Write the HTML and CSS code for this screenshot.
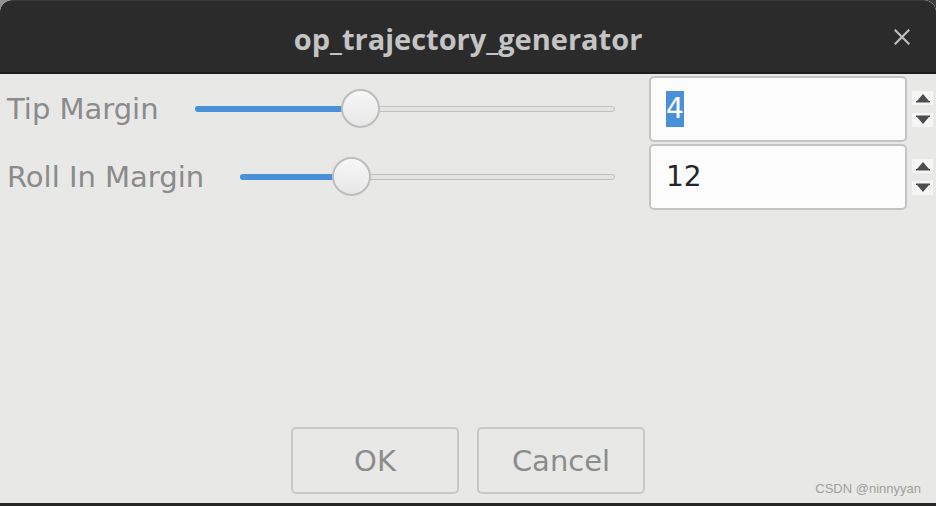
FILE: index.html
```html
<!DOCTYPE html>
<html lang="en">
<head>
<meta charset="utf-8">
<title>op_trajectory_generator</title>
<link rel="stylesheet" href="styles.css">
</head>
<body>
<div class="window">
  <header class="titlebar">
    <span class="spacer"></span>
    <h1 class="title">op_trajectory_generator</h1>
    <div class="actions">
      <button class="close" aria-label="Close">
        <svg width="16" height="16" viewBox="0 0 16 16"><path d="M1.5 1.5 L14.5 14.5 M14.5 1.5 L1.5 14.5" stroke="#bdbdbd" stroke-width="2.2" stroke-linecap="square" fill="none"/></svg>
      </button>
    </div>
  </header>

  <main class="content">
    <div class="row">
      <label class="label">Tip Margin</label>
      <div class="slider">
        <div class="track">
          <div class="fill" style="width:164.5px"></div>
          <div class="handle" style="left:164.5px"></div>
        </div>
      </div>
      <div class="spin"><span class="value selected">4</span></div>
      <div class="arrows">
        <span class="arrow"><svg width="16" height="10" viewBox="0 0 16 10"><path d="M8 1 L14 8 L2 8 Z" fill="#4d4d4d"/><rect x="1" y="8" width="14" height="1.5" fill="#4d4d4d"/></svg></span>
        <span class="arrow"><svg width="16" height="10" viewBox="0 0 16 10"><rect x="1" y="0.5" width="14" height="1.5" fill="#4d4d4d"/><path d="M2 2 L14 2 L8 9 Z" fill="#4d4d4d"/></svg></span>
      </div>
    </div>

    <div class="row">
      <label class="label">Roll In Margin</label>
      <div class="slider">
        <div class="track">
          <div class="fill" style="width:110.5px"></div>
          <div class="handle" style="left:110.5px"></div>
        </div>
      </div>
      <div class="spin"><span class="value">12</span></div>
      <div class="arrows">
        <span class="arrow"><svg width="16" height="10" viewBox="0 0 16 10"><path d="M8 1 L14 8 L2 8 Z" fill="#4d4d4d"/><rect x="1" y="8" width="14" height="1.5" fill="#4d4d4d"/></svg></span>
        <span class="arrow"><svg width="16" height="10" viewBox="0 0 16 10"><rect x="1" y="0.5" width="14" height="1.5" fill="#4d4d4d"/><path d="M2 2 L14 2 L8 9 Z" fill="#4d4d4d"/></svg></span>
      </div>
    </div>

    <div class="buttons">
      <button class="btn">OK</button>
      <button class="btn">Cancel</button>
    </div>
  </main>

  <div class="strip"></div>
  <div class="watermark">CSDN @ninnyyan</div>
</div>
</body>
</html>
```

FILE: styles.css
```css
html, body {
  margin: 0;
  padding: 0;
}
body {
  width: 936px;
  height: 506px;
  overflow: hidden;
  background: linear-gradient(to right, #939393, #3c3c3c);
}
.window {
  position: relative;
  width: 936px;
  height: 506px;
  display: flex;
  flex-direction: column;
  background: #e8e8e7;
  border-radius: 12px 12px 0 0;
  overflow: hidden;
}
.titlebar {
  height: 71px;
  flex: none;
  display: grid;
  grid-template-columns: 1fr auto 1fr;
  align-items: center;
  background: #2b2b2b;
  border-top: 1px solid #3b3b3b;
  border-bottom: 2px solid #1d1d1d;
  border-radius: 12px 12px 0 0;
}
.title {
  margin: 4px 0 0 0;
  font-family: "Open Sans", "DejaVu Sans", sans-serif;
  font-weight: 700;
  font-size: 29px;
  color: #c4c4c4;
  letter-spacing: 0;
}
.actions {
  display: flex;
  justify-content: flex-end;
  padding-right: 26px;
}
.close {
  border: 0;
  padding: 0;
  background: none;
  width: 16px;
  height: 16px;
  display: block;
}
.close svg { display: block; }

.content {
  flex: 1;
  display: flex;
  flex-direction: column;
  gap: 2px;
  padding-top: 2px;
}
.row {
  display: flex;
  align-items: center;
  height: 66px;
  padding: 0 3px 0 7px;
}
.label {
  font-family: "DejaVu Sans", sans-serif;
  font-size: 29px;
  color: #8b8b8b;
  white-space: nowrap;
}
.slider {
  flex: 1;
  margin: 0 34px 0 36px;
  height: 39px;
  display: flex;
  align-items: center;
}
.track {
  position: relative;
  flex: 1;
  height: 4px;
  background: #e4e4e4;
  border: 1px solid #bfbfbf;
  border-radius: 3px;
}
.fill {
  position: absolute;
  left: -1px;
  top: -1px;
  bottom: -1px;
  background: #4a90d9;
  border-radius: 3px;
}
.handle {
  position: absolute;
  top: -18px;
  width: 35px;
  height: 35px;
  margin-left: -19.5px;
  border-radius: 50%;
  border: 2px solid #bdbdbd;
  background: linear-gradient(to bottom, #f7f7f7, #e7e7e7);
}
.spin {
  width: 254px;
  height: 62px;
  flex: none;
  display: flex;
  align-items: center;
  padding: 0;
  background: #fcfcfc;
  border: 2px solid #c4c4c4;
  border-radius: 5px;
}
.value {
  margin-left: 15px;
  font-family: "DejaVu Sans", sans-serif;
  font-size: 28px;
  color: #262626;
  height: 36px;
  line-height: 36px;
  display: inline-block;
}
.value.selected {
  background: #4a90d9;
  color: #ffffff;
}
.arrows {
  margin-left: 5px;
  width: 21px;
  display: flex;
  flex-direction: column;
  gap: 8px;
}
.arrow {
  height: 14px;
  background: #f6f6f6;
  display: flex;
  align-items: center;
  justify-content: center;
}
.arrow svg { display: block; }

.buttons {
  margin-top: auto;
  display: flex;
  justify-content: center;
  gap: 18px;
  padding-bottom: 9px;
}
.btn {
  width: 168px;
  height: 67px;
  box-sizing: border-box;
  border: 2px solid #c8c8c8;
  border-radius: 5px;
  background: #e8e8e7;
  font-family: "DejaVu Sans", sans-serif;
  font-size: 29px;
  color: #8c8c8c;
  padding: 0;
}
.strip {
  height: 3px;
  flex: none;
  background: #262626;
}
.watermark {
  position: absolute;
  right: 15px;
  top: 481px;
  font-family: "Liberation Sans", Arial, sans-serif;
  font-size: 13px;
  line-height: 15px;
  color: #9f9f9f;
}
```
